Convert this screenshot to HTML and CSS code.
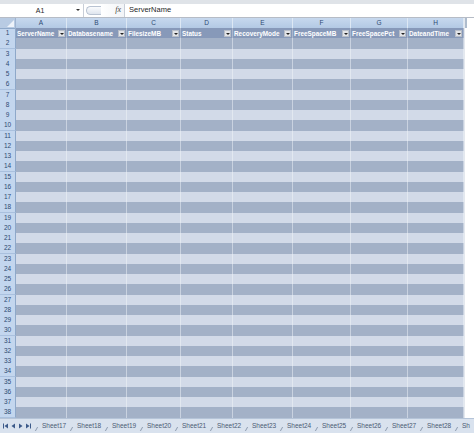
FILE: index.html
```html
<!DOCTYPE html>
<html>
<head>
<meta charset="utf-8">
<link rel="stylesheet" href="styles.css">
</head>
<body>
<div class="app">
  <div class="fbar">
    <div class="namebox"><span class="ref">A1</span><span class="dd"></span></div>
    <div class="pill"></div>
    <div class="fx">fx</div>
    <div class="ftext">ServerName</div>
  </div>
  <div class="grid">
    <div class="row colhead"><div class="corner"><span class="tri"></span></div><div class="ch">A</div><div class="ch">B</div><div class="ch">C</div><div class="ch">D</div><div class="ch">E</div><div class="ch">F</div><div class="ch">G</div><div class="ch">H</div><div class="edge split"></div></div>
    <div class="row thead"><div class="rh">1</div><div class="c"><span>ServerName</span><b class="btn"></b></div><div class="c"><span>Databasename</span><b class="btn"></b></div><div class="c"><span>FilesizeMB</span><b class="btn"></b></div><div class="c"><span>Status</span><b class="btn"></b></div><div class="c"><span>RecoveryMode</span><b class="btn"></b></div><div class="c"><span>FreeSpaceMB</span><b class="btn"></b></div><div class="c"><span>FreeSpacePct</span><b class="btn"></b></div><div class="c"><span>DateandTime</span><b class="btn"></b></div><div class="edge"></div></div>
    <div class="row even"><div class="rh">2</div><div class="c"></div><div class="c"></div><div class="c"></div><div class="c"></div><div class="c"></div><div class="c"></div><div class="c"></div><div class="c"></div><div class="edge"></div></div>
    <div class="row odd"><div class="rh">3</div><div class="c"></div><div class="c"></div><div class="c"></div><div class="c"></div><div class="c"></div><div class="c"></div><div class="c"></div><div class="c"></div><div class="edge"></div></div>
    <div class="row even"><div class="rh">4</div><div class="c"></div><div class="c"></div><div class="c"></div><div class="c"></div><div class="c"></div><div class="c"></div><div class="c"></div><div class="c"></div><div class="edge"></div></div>
    <div class="row odd"><div class="rh">5</div><div class="c"></div><div class="c"></div><div class="c"></div><div class="c"></div><div class="c"></div><div class="c"></div><div class="c"></div><div class="c"></div><div class="edge"></div></div>
    <div class="row even"><div class="rh">6</div><div class="c"></div><div class="c"></div><div class="c"></div><div class="c"></div><div class="c"></div><div class="c"></div><div class="c"></div><div class="c"></div><div class="edge"></div></div>
    <div class="row odd"><div class="rh">7</div><div class="c"></div><div class="c"></div><div class="c"></div><div class="c"></div><div class="c"></div><div class="c"></div><div class="c"></div><div class="c"></div><div class="edge"></div></div>
    <div class="row even"><div class="rh">8</div><div class="c"></div><div class="c"></div><div class="c"></div><div class="c"></div><div class="c"></div><div class="c"></div><div class="c"></div><div class="c"></div><div class="edge"></div></div>
    <div class="row odd"><div class="rh">9</div><div class="c"></div><div class="c"></div><div class="c"></div><div class="c"></div><div class="c"></div><div class="c"></div><div class="c"></div><div class="c"></div><div class="edge"></div></div>
    <div class="row even"><div class="rh">10</div><div class="c"></div><div class="c"></div><div class="c"></div><div class="c"></div><div class="c"></div><div class="c"></div><div class="c"></div><div class="c"></div><div class="edge"></div></div>
    <div class="row odd"><div class="rh">11</div><div class="c"></div><div class="c"></div><div class="c"></div><div class="c"></div><div class="c"></div><div class="c"></div><div class="c"></div><div class="c"></div><div class="edge"></div></div>
    <div class="row even"><div class="rh">12</div><div class="c"></div><div class="c"></div><div class="c"></div><div class="c"></div><div class="c"></div><div class="c"></div><div class="c"></div><div class="c"></div><div class="edge"></div></div>
    <div class="row odd"><div class="rh">13</div><div class="c"></div><div class="c"></div><div class="c"></div><div class="c"></div><div class="c"></div><div class="c"></div><div class="c"></div><div class="c"></div><div class="edge"></div></div>
    <div class="row even"><div class="rh">14</div><div class="c"></div><div class="c"></div><div class="c"></div><div class="c"></div><div class="c"></div><div class="c"></div><div class="c"></div><div class="c"></div><div class="edge"></div></div>
    <div class="row odd"><div class="rh">15</div><div class="c"></div><div class="c"></div><div class="c"></div><div class="c"></div><div class="c"></div><div class="c"></div><div class="c"></div><div class="c"></div><div class="edge"></div></div>
    <div class="row even"><div class="rh">16</div><div class="c"></div><div class="c"></div><div class="c"></div><div class="c"></div><div class="c"></div><div class="c"></div><div class="c"></div><div class="c"></div><div class="edge"></div></div>
    <div class="row odd"><div class="rh">17</div><div class="c"></div><div class="c"></div><div class="c"></div><div class="c"></div><div class="c"></div><div class="c"></div><div class="c"></div><div class="c"></div><div class="edge"></div></div>
    <div class="row even"><div class="rh">18</div><div class="c"></div><div class="c"></div><div class="c"></div><div class="c"></div><div class="c"></div><div class="c"></div><div class="c"></div><div class="c"></div><div class="edge"></div></div>
    <div class="row odd"><div class="rh">19</div><div class="c"></div><div class="c"></div><div class="c"></div><div class="c"></div><div class="c"></div><div class="c"></div><div class="c"></div><div class="c"></div><div class="edge"></div></div>
    <div class="row even"><div class="rh">20</div><div class="c"></div><div class="c"></div><div class="c"></div><div class="c"></div><div class="c"></div><div class="c"></div><div class="c"></div><div class="c"></div><div class="edge"></div></div>
    <div class="row odd"><div class="rh">21</div><div class="c"></div><div class="c"></div><div class="c"></div><div class="c"></div><div class="c"></div><div class="c"></div><div class="c"></div><div class="c"></div><div class="edge"></div></div>
    <div class="row even"><div class="rh">22</div><div class="c"></div><div class="c"></div><div class="c"></div><div class="c"></div><div class="c"></div><div class="c"></div><div class="c"></div><div class="c"></div><div class="edge"></div></div>
    <div class="row odd"><div class="rh">23</div><div class="c"></div><div class="c"></div><div class="c"></div><div class="c"></div><div class="c"></div><div class="c"></div><div class="c"></div><div class="c"></div><div class="edge"></div></div>
    <div class="row even"><div class="rh">24</div><div class="c"></div><div class="c"></div><div class="c"></div><div class="c"></div><div class="c"></div><div class="c"></div><div class="c"></div><div class="c"></div><div class="edge"></div></div>
    <div class="row odd"><div class="rh">25</div><div class="c"></div><div class="c"></div><div class="c"></div><div class="c"></div><div class="c"></div><div class="c"></div><div class="c"></div><div class="c"></div><div class="edge"></div></div>
    <div class="row even"><div class="rh">26</div><div class="c"></div><div class="c"></div><div class="c"></div><div class="c"></div><div class="c"></div><div class="c"></div><div class="c"></div><div class="c"></div><div class="edge"></div></div>
    <div class="row odd"><div class="rh">27</div><div class="c"></div><div class="c"></div><div class="c"></div><div class="c"></div><div class="c"></div><div class="c"></div><div class="c"></div><div class="c"></div><div class="edge"></div></div>
    <div class="row even"><div class="rh">28</div><div class="c"></div><div class="c"></div><div class="c"></div><div class="c"></div><div class="c"></div><div class="c"></div><div class="c"></div><div class="c"></div><div class="edge"></div></div>
    <div class="row odd"><div class="rh">29</div><div class="c"></div><div class="c"></div><div class="c"></div><div class="c"></div><div class="c"></div><div class="c"></div><div class="c"></div><div class="c"></div><div class="edge"></div></div>
    <div class="row even"><div class="rh">30</div><div class="c"></div><div class="c"></div><div class="c"></div><div class="c"></div><div class="c"></div><div class="c"></div><div class="c"></div><div class="c"></div><div class="edge"></div></div>
    <div class="row odd"><div class="rh">31</div><div class="c"></div><div class="c"></div><div class="c"></div><div class="c"></div><div class="c"></div><div class="c"></div><div class="c"></div><div class="c"></div><div class="edge"></div></div>
    <div class="row even"><div class="rh">32</div><div class="c"></div><div class="c"></div><div class="c"></div><div class="c"></div><div class="c"></div><div class="c"></div><div class="c"></div><div class="c"></div><div class="edge"></div></div>
    <div class="row odd"><div class="rh">33</div><div class="c"></div><div class="c"></div><div class="c"></div><div class="c"></div><div class="c"></div><div class="c"></div><div class="c"></div><div class="c"></div><div class="edge"></div></div>
    <div class="row even"><div class="rh">34</div><div class="c"></div><div class="c"></div><div class="c"></div><div class="c"></div><div class="c"></div><div class="c"></div><div class="c"></div><div class="c"></div><div class="edge"></div></div>
    <div class="row odd"><div class="rh">35</div><div class="c"></div><div class="c"></div><div class="c"></div><div class="c"></div><div class="c"></div><div class="c"></div><div class="c"></div><div class="c"></div><div class="edge"></div></div>
    <div class="row even"><div class="rh">36</div><div class="c"></div><div class="c"></div><div class="c"></div><div class="c"></div><div class="c"></div><div class="c"></div><div class="c"></div><div class="c"></div><div class="edge"></div></div>
    <div class="row odd"><div class="rh">37</div><div class="c"></div><div class="c"></div><div class="c"></div><div class="c"></div><div class="c"></div><div class="c"></div><div class="c"></div><div class="c"></div><div class="edge"></div></div>
    <div class="row even"><div class="rh">38</div><div class="c"></div><div class="c"></div><div class="c"></div><div class="c"></div><div class="c"></div><div class="c"></div><div class="c"></div><div class="c"></div><div class="edge"></div></div>
  </div>
  <div class="tabs">
    <div class="nav">
      <svg width="30" height="8" viewBox="0 0 30 8">
        <rect x="1" y="1.5" width="1" height="5" fill="#3c5a8a"/>
        <path d="M6 1.5 L2.5 4 L6 6.5 Z" fill="#3c5a8a"/>
        <path d="M13 1.5 L9.5 4 L13 6.5 Z" fill="#3c5a8a"/>
        <path d="M17 1.5 L20.5 4 L17 6.5 Z" fill="#3c5a8a"/>
        <path d="M24 1.5 L27.5 4 L24 6.5 Z" fill="#3c5a8a"/>
        <rect x="28" y="1.5" width="1" height="5" fill="#3c5a8a"/>
      </svg>
    </div>
    <div class="tab">Sheet17</div>
    <div class="tab">Sheet18</div>
    <div class="tab">Sheet19</div>
    <div class="tab">Sheet20</div>
    <div class="tab">Sheet21</div>
    <div class="tab">Sheet22</div>
    <div class="tab">Sheet23</div>
    <div class="tab">Sheet24</div>
    <div class="tab">Sheet25</div>
    <div class="tab">Sheet26</div>
    <div class="tab">Sheet27</div>
    <div class="tab">Sheet28</div>
    <div class="tab last">Sh</div>
  </div>
</div>
</body>
</html>
```
FILE: styles.css
```css
* { box-sizing: border-box; }
html, body { margin: 0; padding: 0; }
body {
  width: 474px;
  height: 433px;
  overflow: hidden;
  background: #ffffff;
  font-family: "Liberation Sans", Arial, sans-serif;
}
.app {
  width: 474px;
  height: 433px;
  display: flex;
  flex-direction: column;
  overflow: hidden;
}

/* formula bar */
.fbar {
  height: 17.5px;
  flex: none;
  display: flex;
  align-items: stretch;
  background: #ffffff;
  border-top: 4px solid #dfe3e8;
  border-bottom: 1px solid #b6bcc6;
  font-size: 7px;
  color: #1f1f1f;
}
.namebox {
  width: 84px;
  display: flex;
  align-items: center;
  border-right: 1px solid #c8ced8;
  padding-right: 2px;
}
.ref {
  flex: 1;
  text-align: center;
  padding-left: 4px;
}
.dd {
  width: 0;
  height: 0;
  border-left: 2px solid transparent;
  border-right: 2px solid transparent;
  border-top: 2.5px solid #333;
  margin-right: 1px;
}
.pill {
  width: 15px;
  margin: 2px 0 2px 2px;
  border: 1px solid #b9c3d2;
  border-right: none;
  border-radius: 7px 0 0 7px;
  background: linear-gradient(#fafbfd, #dfe5ee);
}
.fx {
  width: 24px;
  text-align: right;
  padding-right: 3px;
  font-family: "Liberation Serif", serif;
  font-style: italic;
  font-size: 8px;
  line-height: 12px;
  color: #444;
  border-right: 1px solid #c8ced8;
  background: linear-gradient(90deg, #ffffff, #f2f4f7);
}
.ftext {
  flex: 1;
  padding-left: 4px;
  line-height: 12px;
  font-size: 7.5px;
}

/* grid */
.grid {
  flex: none;
  display: flex;
  flex-direction: column;
}
.row {
  display: grid;
  grid-template-columns: 16px 51px 60px 54px 52px 60px 58px 57px 56px 1fr;
  height: 10.25px;
}
.colhead {
  height: 10.5px;
  font-size: 6.5px;
  color: #2e4a72;
}
.corner {
  background: #b8cbe3;
  border-right: 1px solid #9fb4d0;
  border-bottom: 1px solid #8ea8c9;
  position: relative;
}
.tri {
  position: absolute;
  right: 1px;
  bottom: 1px;
  width: 0;
  height: 0;
  border-left: 7px solid transparent;
  border-bottom: 7px solid #eef3fa;
}
.ch {
  background: linear-gradient(#c7d8ee, #b3c9e4);
  border-right: 1px solid #dde8f4;
  border-bottom: 1px solid #8ea8c9;
  text-align: center;
  line-height: 10px;
}
.edge {
  background: #ffffff;
  border-left: 1px solid #e4e8ee;
}
.split {
  background: linear-gradient(90deg, #aebccd 0, #aebccd 2px, #ffffff 2px);
}
.rh {
  background: #c3d6ee;
  border-right: 1px solid #8ea8c9;
  border-bottom: 1px solid #a9c0de;
  font-size: 6.5px;
  color: #2e4a72;
  text-align: center;
  line-height: 10px;
}
.c {
  border-right: 1px solid #c9d2e0;
}
.even .c { background: #a3b1c7; }
.odd .c { background: #d2dae8; border-right-color: #e2e8f0; }

.thead .c {
  background: #8799b9;
  border-right: 1px solid #aab7cd;
  display: flex;
  align-items: center;
  justify-content: space-between;
  padding: 0 1px 0 1px;
  color: #ffffff;
  font-weight: bold;
  font-size: 6.4px;
  white-space: nowrap;
  overflow: hidden;
}
.btn {
  flex: none;
  width: 7px;
  height: 7px;
  background: #e2e4e8;
  border: 1px solid #b8bec8;
  position: relative;
}
.btn::after {
  content: "";
  position: absolute;
  left: 1px;
  top: 1.5px;
  width: 0;
  height: 0;
  border-left: 2px solid transparent;
  border-right: 2px solid transparent;
  border-top: 2.5px solid #222;
}

/* sheet tabs */
.tabs {
  flex: 1;
  display: flex;
  align-items: center;
  background: #d9e2ee;
  border-top: 1px solid #b5c4d8;
  font-size: 6.5px;
  color: #4a5a73;
  white-space: nowrap;
  overflow: hidden;
}
.nav {
  width: 35px;
  flex: none;
  display: flex;
  align-items: center;
  padding-left: 2px;
}
.nav svg { display: block; }
.tab {
  flex: none;
  width: 35px;
  position: relative;
  padding-left: 7px;
}
.tab.last {
  width: 14px;
}
.tab::before {
  content: "";
  position: absolute;
  left: 1px;
  bottom: -2px;
  width: 1px;
  height: 4px;
  background: #8d9bb0;
  transform: skewX(-30deg);
}
```
